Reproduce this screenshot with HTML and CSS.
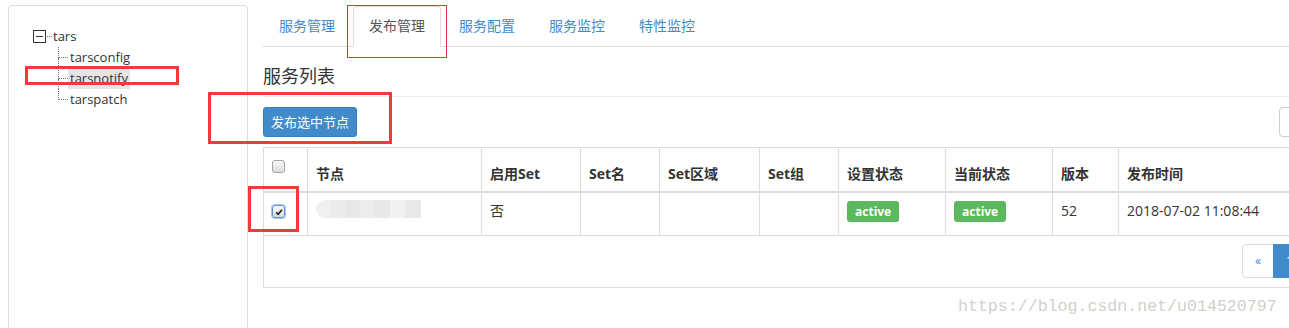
FILE: index.html
```html
<!DOCTYPE html>
<html lang="zh-CN">
<head>
<meta charset="utf-8">
<title>发布管理</title>
<link rel="stylesheet" href="styles.css">
</head>
<body>
<div class="layout">
  <aside class="sidebar">
    <div class="tree">
      <div class="tree-root">
        <span class="toggle"><span class="minus"></span></span>
        <span class="root-conn"></span>
        <span class="node-label">tars</span>
      </div>
      <ul class="children">
        <li><span class="conn"><span class="up"></span><span class="down"></span></span><span class="node-label">tarsconfig</span></li>
        <li><span class="conn"><span class="up"></span><span class="down"></span></span><span class="node-label selected">tarsnotify</span></li>
        <li class="last"><span class="conn"><span class="up"></span><span class="down"></span></span><span class="node-label">tarspatch</span></li>
      </ul>
    </div>
  </aside>

  <main class="main">
    <ul class="tabs">
      <li><a>服务管理</a></li>
      <li class="active"><a>发布管理</a></li>
      <li><a>服务配置</a></li>
      <li><a>服务监控</a></li>
      <li><a>特性监控</a></li>
    </ul>

    <h2 class="section-title">服务列表</h2>

    <div class="toolbar">
      <button class="btn-primary">发布选中节点</button>
      <div class="tool-right"></div>
    </div>

    <div class="table-box">
      <table class="grid">
        <thead>
          <tr>
            <th class="c-cb cb-cell"><span class="cb"></span></th>
            <th class="c-node">节点</th>
            <th class="c-set">启用Set</th>
            <th class="c-setname">Set名</th>
            <th class="c-setarea">Set区域</th>
            <th class="c-setgroup">Set组</th>
            <th class="c-state">设置状态</th>
            <th class="c-state">当前状态</th>
            <th class="c-ver">版本</th>
            <th class="c-time">发布时间</th>
          </tr>
        </thead>
        <tbody>
          <tr>
            <td class="cb-cell"><span class="cb checked"><svg viewBox="0 0 12 12" width="12" height="12"><path d="M2.6 6.4 L5 8.8 L9.6 3.2" fill="none" stroke="#222" stroke-width="2"/></svg></span></td>
            <td><span class="blur"></span></td>
            <td>否</td>
            <td></td>
            <td></td>
            <td></td>
            <td><span class="label-ok">active</span></td>
            <td><span class="label-ok">active</span></td>
            <td>52</td>
            <td>2018-07-02 11:08:44</td>
          </tr>
        </tbody>
      </table>
      <div class="pager">
        <a class="pg first">«</a>
        <a class="pg current">1</a>
        <a class="pg last">»</a>
      </div>
    </div>
  </main>
</div>

<div class="mark mark-tree"></div>
<div class="mark mark-tab"></div>
<div class="mark mark-btn"></div>
<div class="mark mark-cb"></div>
<div class="watermark">https://blog.csdn.net/u014520797</div>
</body>
</html>
```

FILE: styles.css
```css
html, body {
  margin: 0;
  padding: 0;
  background: #fff;
}
body {
  width: 1289px;
  height: 328px;
  overflow: hidden;
  position: relative;
  font-family: "Open Sans", "Noto Sans CJK SC", sans-serif;
  font-size: 14px;
  color: #333;
}
.layout {
  display: flex;
  align-items: flex-start;
}

/* sidebar tree */
.sidebar {
  flex-shrink: 0;
  box-sizing: border-box;
  width: 240px;
  height: 420px;
  margin: 5px 0 0 8px;
  border: 1px solid #ddd;
  border-radius: 4px;
  padding: 20px 0 0 24px;
}
.tree {
  font-size: 13px;
  color: #333;
}
.tree-root {
  display: flex;
  align-items: center;
  height: 21px;
}
.toggle {
  box-sizing: border-box;
  width: 13px;
  height: 13px;
  border: 1px solid #333;
  display: flex;
  align-items: center;
  justify-content: center;
}
.minus {
  width: 7px;
  height: 1px;
  background: #333;
}
.root-conn {
  width: 5px;
  margin-left: 1px;
  border-top: 1px dotted #777;
}
.node-label {
  display: inline-block;
  height: 21px;
  line-height: 20px;
  padding: 0 2px;
}
.tree-root .node-label {
  padding: 0;
  margin-left: 1px;
}
.node-label.selected {
  background: #e5e5e5;
}
.children {
  list-style: none;
  margin: 0 0 0 25px;
  padding: 0;
}
.children li {
  display: flex;
  height: 21px;
}
.conn {
  display: flex;
  flex-direction: column;
  width: 10px;
}
.conn .up {
  height: 10px;
  border-left: 1px dotted #777;
  border-bottom: 1px dotted #777;
}
.conn .down {
  flex: 1;
  border-left: 1px dotted #777;
}
.children li.last .conn .down {
  border-left-color: transparent;
}

/* main */
.main {
  flex-shrink: 0;
  width: 1100px;
  margin-left: 15px;
}
.tabs {
  list-style: none;
  margin: 6px 0 0;
  padding: 0;
  display: flex;
  border-bottom: 1px solid #ddd;
}
.tabs li {
  margin-right: 2px;
}
.tabs a {
  display: block;
  padding: 9px 15px 10px;
  line-height: 20px;
  border: 1px solid transparent;
  border-radius: 4px 4px 0 0;
  margin-bottom: -1px;
  color: #428bca;
  font-size: 14px;
}
.tabs li.active a {
  color: #555;
  background: #fff;
  border-color: #ddd #ddd transparent;
}
.section-title {
  margin: 17px 0 0;
  font-size: 18px;
  font-weight: normal;
  line-height: 24px;
  padding-bottom: 8px;
  border-bottom: 1px solid #eee;
  color: #333;
}
.toolbar {
  display: flex;
  margin-top: 10px;
  height: 30px;
}
.btn-primary {
  box-sizing: border-box;
  height: 30px;
  padding: 0 7px;
  background: #428bca;
  border: 1px solid #357ebd;
  border-radius: 3px;
  color: #fff;
  font-family: inherit;
  font-size: 13px;
  line-height: 28px;
}
.tool-right {
  box-sizing: border-box;
  margin-left: auto;
  width: 84px;
  height: 30px;
  border: 1px solid #ccc;
  border-radius: 4px;
}

/* table */
.table-box {
  margin-top: 10px;
  border: 1px solid #ddd;
}
.grid {
  width: 1098px;
  table-layout: fixed;
  border-collapse: separate;
  border-spacing: 0;
}
.grid th, .grid td {
  box-sizing: border-box;
  text-align: left;
  line-height: 20px;
  border-left: 1px solid #ddd;
  white-space: nowrap;
  overflow: hidden;
}
.grid th:first-child, .grid td:first-child {
  border-left: none;
}
.grid th {
  height: 45px;
  font-weight: bold;
  padding: 0 8px 7px;
  vertical-align: bottom;
  border-bottom: 2px solid #ddd;
}
.grid td {
  height: 43px;
  padding: 8px 8px 0;
  vertical-align: top;
  border-bottom: 1px solid #ddd;
}
.grid .cb-cell {
  vertical-align: top;
}
.grid th.cb-cell {
  padding: 12px 8px 0;
}
.grid td.cb-cell {
  padding: 12px 8px 0;
}
.c-cb { width: 43px; }
.c-node { width: 174px; }
.c-set { width: 99px; }
.c-setname { width: 79px; }
.c-setarea { width: 100px; }
.c-setgroup { width: 79px; }
.c-state { width: 107px; }
.c-ver { width: 66px; }
.c-time { width: 244px; }

.cb {
  display: block;
  box-sizing: border-box;
  width: 13px;
  height: 13px;
  border: 1px solid #a5a5a5;
  border-radius: 3px;
  background: linear-gradient(#f7f7f7, #dedede);
}
.cb.checked {
  border-color: #5d8fd6;
  box-shadow: 0 0 0 1px #a9c9f0;
  display: flex;
  align-items: center;
  justify-content: center;
}
.cb.checked svg {
  width: 10px;
  height: 10px;
}
.blur {
  display: block;
  width: 105px;
  height: 18px;
  margin-top: -1px;
  border-radius: 9px 0 0 9px;
  background:
    linear-gradient(to right,
      #f0f0f0 0 14px,
      #ebebed 14px 29px,
      #e7e7e7 29px 44px,
      #ececec 44px 59px,
      #e8e8e8 59px 74px,
      #f1f1f1 74px 89px,
      #e9e9e9 89px 105px);
  filter: blur(0.6px);
}
.label-ok {
  display: inline-block;
  vertical-align: top;
  padding: 3px 8px;
  line-height: 15px;
  font-size: 12px;
  font-weight: bold;
  color: #fff;
  background: #5cb85c;
  border-radius: 3px;
}

/* pagination */
.pager {
  display: flex;
  justify-content: flex-end;
  margin: 8px 23px 9px 0;
}
.pg {
  display: block;
  box-sizing: border-box;
  height: 34px;
  padding: 0 12px;
  line-height: 32px;
  border: 1px solid #ddd;
  color: #428bca;
  font-size: 14px;
  background: #fff;
}
.pg + .pg {
  margin-left: -1px;
}
.pg.first {
  border-radius: 4px 0 0 4px;
  font-size: 12px;
}
.pg.last {
  border-radius: 0 4px 4px 0;
}
.pg.current {
  background: #428bca;
  border-color: #428bca;
  color: #fff;
}

/* annotation overlays */
.mark {
  position: absolute;
  box-sizing: border-box;
  border: 3px solid #f23a3a;
  pointer-events: none;
}
.mark-tree { left: 25px; top: 66px; width: 154px; height: 19px; }
.mark-tab { left: 347px; top: 5px; width: 100px; height: 53px; border-width: 1px; border-color: #e53333; }
.mark-btn { left: 208px; top: 92px; width: 184px; height: 52px; }
.mark-cb { left: 248px; top: 186px; width: 51px; height: 46px; }

.watermark {
  position: absolute;
  left: 958px;
  top: 296px;
  font-family: "Liberation Mono", monospace;
  font-size: 16.6px;
  line-height: 22px;
  color: #d3d0ca;
  pointer-events: none;
}
```
